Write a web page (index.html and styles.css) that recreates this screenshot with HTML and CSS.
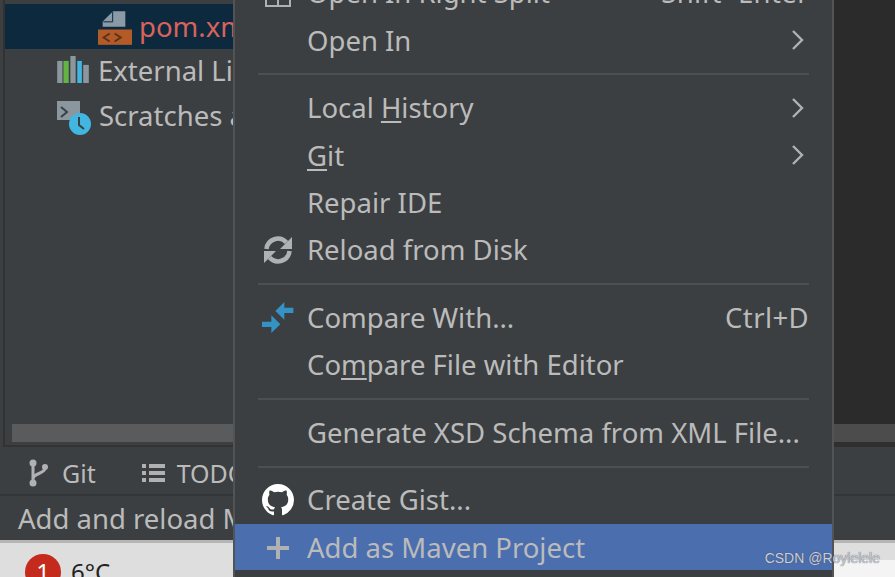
FILE: index.html
```html
<!DOCTYPE html>
<html lang="en">
<head>
  <meta charset="UTF-8">
  <title>Add as Maven Project</title>
  <link rel="stylesheet" href="styles.css">
</head>
<body>
  <div class="main-area">
    <div class="project-pane">
      <div class="tree-row selected">
        <svg class="file-icon" width="34" height="34" viewBox="294 33 102 101">
          <path d="M339 33h37v47h-68v-16z" fill="#8a9aa6"/>
          <path d="M338 35v30h-28" fill="none" stroke="#0d293e" stroke-width="3"/>
          <rect x="294" y="88" width="102" height="46" fill="#b45a27"/>
          <path d="M329 100l-18 12 18 12M344 100l18 12-18 12" fill="none" stroke="#5a3318" stroke-width="6"/>
        </svg>
        <span class="file-name">pom.xml</span>
      </div>
      <div class="tree-row top-level">
        <svg class="tree-icon libraries" width="32" height="27" viewBox="171 168 96 82">
          <rect x="171" y="183" width="16" height="67" fill="#8b979f"/>
          <rect x="190" y="183" width="16" height="67" fill="#62b543"/>
          <rect x="211" y="168" width="16" height="82" fill="#8b979f"/>
          <rect x="232" y="183" width="14" height="67" fill="#40b6e0"/>
          <rect x="250" y="195" width="17" height="55" fill="#8b979f"/>
        </svg>
        <span>External Libraries</span>
      </div>
      <div class="tree-row top-level">
        <svg class="tree-icon scratches" width="34" height="34" viewBox="0 0 34 34">
          <path d="M0 0h23v15a12 12 0 0 0-10 4H0z" fill="#8b979f"/>
          <path d="M4 6l6 5-6 5" fill="none" stroke="#3c3f41" stroke-width="2"/>
          <circle cx="23" cy="23" r="11" fill="#40b6e0"/>
          <path d="M22 16v8l5 4" fill="none" stroke="#3c3f41" stroke-width="2"/>
        </svg>
        <span>Scratches and Consoles</span>
      </div>
    </div>
    <div class="editor-pane"></div>
  </div>

  <div class="scroll-row">
    <div class="scroll-left"><div class="scroll-thumb"></div></div>
    <div class="scroll-right"><div class="scroll-thumb right"></div></div>
  </div>

  <div class="tool-bar">
    <div class="tool-btn">
      <svg width="20" height="28" viewBox="0 0 20 28">
        <path d="M5 4v20M17 9c0 6-12 5-12 11" fill="none" stroke="#afb1b3" stroke-width="3"/>
        <circle cx="5" cy="4" r="3.5" fill="#afb1b3"/>
        <circle cx="5" cy="24" r="3.5" fill="#afb1b3"/>
        <circle cx="17" cy="8" r="3" fill="#afb1b3"/>
      </svg>
      <span>Git</span>
    </div>
    <div class="tool-btn">
      <svg width="23" height="20" viewBox="0 0 23 20">
        <path d="M0 1h4v4H0zM7 1h16v4H7zM0 8h4v4H0zM7 8h16v4H7zM0 15h4v4H0zM7 15h16v4H7z" fill="#afb1b3"/>
      </svg>
      <span>TODO</span>
    </div>
  </div>

  <div class="status-bar">Add and reload Maven Project</div>

  <div class="task-bar">
    <div class="weather-badge">1</div>
    <div class="weather-temp">6°C</div>
    <div class="task-right"></div>
  </div>

  <div class="context-menu">
    <div class="menu-item">
      <span class="menu-icon">
        <svg width="26" height="28" viewBox="0 0 26 28">
          <path d="M1 1h24v26H1zM1 14h24M13 14v13" fill="none" stroke="#afb1b3" stroke-width="2"/>
        </svg>
      </span>
      <span class="menu-label">Open In Right Split</span>
      <span class="menu-key">Shift+Enter</span>
    </div>
    <div class="menu-item">
      <span class="menu-icon"></span>
      <span class="menu-label">Open In</span>
      <svg class="menu-arrow" width="14" height="22" viewBox="0 0 14 22"><path d="M2 2l9 9-9 9" fill="none" stroke="#afb1b3" stroke-width="2.4"/></svg>
    </div>
    <div class="menu-sep"></div>
    <div class="menu-item">
      <span class="menu-icon"></span>
      <span class="menu-label">Local <u>H</u>istory</span>
      <svg class="menu-arrow" width="14" height="22" viewBox="0 0 14 22"><path d="M2 2l9 9-9 9" fill="none" stroke="#afb1b3" stroke-width="2.4"/></svg>
    </div>
    <div class="menu-item">
      <span class="menu-icon"></span>
      <span class="menu-label"><u>G</u>it</span>
      <svg class="menu-arrow" width="14" height="22" viewBox="0 0 14 22"><path d="M2 2l9 9-9 9" fill="none" stroke="#afb1b3" stroke-width="2.4"/></svg>
    </div>
    <div class="menu-item">
      <span class="menu-icon"></span>
      <span class="menu-label">Repair IDE</span>
    </div>
    <div class="menu-item">
      <span class="menu-icon">
        <svg width="28" height="28" viewBox="0 0 28 28">
          <path d="M2.5 13a11.5 11.5 0 0 1 20-6.5M25.5 15a11.5 11.5 0 0 1-20 6.5" fill="none" stroke="#afb1b3" stroke-width="4.5"/>
          <path d="M28 1v12H16zM0 27V15h12z" fill="#afb1b3"/>
        </svg>
      </span>
      <span class="menu-label">Reload from Disk</span>
    </div>
    <div class="menu-sep"></div>
    <div class="menu-item">
      <span class="menu-icon">
        <svg width="32" height="31" viewBox="66 245 96 93">
          <path d="M133 245v17h27v16h-27v20l-27-26z" fill="#3592c4"/>
          <path d="M94 285l27 27-27 26v-18H66v-16h28z" fill="#3592c4"/>
        </svg>
      </span>
      <span class="menu-label">Compare With...</span>
      <span class="menu-key">Ctrl+D</span>
    </div>
    <div class="menu-item">
      <span class="menu-icon"></span>
      <span class="menu-label">Co<u>m</u>pare File with Editor</span>
    </div>
    <div class="menu-sep"></div>
    <div class="menu-item">
      <span class="menu-icon"></span>
      <span class="menu-label">Generate XSD Schema from XML File...</span>
    </div>
    <div class="menu-sep"></div>
    <div class="menu-item">
      <span class="menu-icon">
        <svg width="32" height="32" viewBox="0 0 16 16">
          <path fill="#ffffff" d="M8 0C3.58 0 0 3.58 0 8c0 3.54 2.29 6.53 5.47 7.59.4.07.55-.17.55-.38 0-.19-.01-.82-.01-1.49-2.01.37-2.53-.49-2.69-.94-.09-.23-.48-.94-.82-1.13-.28-.15-.68-.52-.01-.53.63-.01 1.08.58 1.23.82.72 1.21 1.87.87 2.33.66.07-.52.28-.87.51-1.07-1.78-.2-3.64-.89-3.64-3.95 0-.87.31-1.59.82-2.15-.08-.2-.36-1.02.08-2.12 0 0 .67-.21 2.2.82.64-.18 1.32-.27 2-.27.68 0 1.36.09 2 .27 1.53-1.04 2.2-.82 2.2-.82.44 1.1.16 1.92.08 2.12.51.56.82 1.27.82 2.15 0 3.07-1.87 3.75-3.65 3.95.29.25.54.73.54 1.48 0 1.07-.01 1.93-.01 2.2 0 .21.15.46.55.38A8.013 8.013 0 0016 8c0-4.42-3.58-8-8-8z"/>
        </svg>
      </span>
      <span class="menu-label">Create Gist...</span>
    </div>
    <div class="menu-item active">
      <span class="menu-icon">
        <svg width="22" height="22" viewBox="0 0 22 22"><path d="M11 0v22M0 11h22" stroke="#afb1b3" stroke-width="4"/></svg>
      </span>
      <span class="menu-label">Add as Maven Project</span>
    </div>
  </div>

  <div class="watermark">CSDN @Roylelele</div>
</body>
</html>
```

FILE: styles.css
```css
* {
  box-sizing: border-box;
}

body {
  margin: 0;
  width: 895px;
  height: 577px;
  overflow: hidden;
  position: relative;
  display: flex;
  flex-direction: column;
  background: #3c3f41;
  color: #bbbbbb;
  font-family: "Noto Sans", sans-serif;
  font-size: 27.5px;
}

.main-area {
  display: flex;
  flex-shrink: 0;
  height: 424px;
}

.project-pane {
  flex: 1;
  margin-left: 3px;
  padding-top: 4px;
  border-left: 2px solid #323232;
}

.editor-pane {
  width: 61px;
  background: #2b2b2b;
}

.tree-row {
  display: flex;
  align-items: center;
  height: 45px;
  white-space: nowrap;
}

.tree-row.selected {
  background: #0d293e;
  padding-left: 93px;
}

.tree-row.top-level {
  padding-left: 52px;
  padding-bottom: 2px;
}

.file-icon {
  margin: 3px 7px 0 0;
}

.tree-icon {
  margin-right: 9px;
}

.tree-icon.libraries {
  margin-bottom: 2px;
}

.tree-icon.scratches {
  margin-top: 5px;
  margin-right: 8px;
}

.file-name {
  color: #d9625c;
}

.scroll-row {
  display: flex;
  flex-shrink: 0;
  height: 23px;
}

.scroll-left {
  flex: 1;
  margin-left: 3px;
  padding-left: 7px;
  border-left: 2px solid #323232;
  border-bottom: 2px solid #313335;
}

.scroll-right {
  width: 61px;
  background: #2f2f2f;
}

.scroll-thumb {
  height: 18px;
  background: #5a5b5d;
}

.scroll-thumb.right {
  background: #4c4c4c;
}

.tool-bar {
  display: flex;
  flex-shrink: 0;
  align-items: center;
  gap: 46px;
  height: 49px;
  padding: 5px 0 0 28px;
  border-bottom: 2px solid #333537;
  font-size: 25px;
}

.tool-btn {
  display: flex;
  align-items: center;
  gap: 12px;
}

.tool-btn:first-child {
  gap: 14px;
}

.status-bar {
  flex-shrink: 0;
  height: 44px;
  padding-left: 18px;
  line-height: 46px;
  white-space: nowrap;
}

.task-bar {
  flex: 0 0 37px;
  display: flex;
  overflow: hidden;
  background: #dedede;
  border-top: 3px solid #b5b5b5;
  color: #222222;
  font-size: 24px;
  padding-left: 25px;
}

.weather-badge {
  width: 36px;
  height: 36px;
  margin-top: 11px;
  border-radius: 50%;
  background: #c42b1c;
  color: white;
  text-align: center;
  line-height: 36px;
  flex-shrink: 0;
}

.weather-temp {
  margin: 14px 0 0 10px;
  line-height: 30px;
}

.task-right {
  width: 61px;
  height: 17px;
  margin-left: auto;
  align-self: flex-end;
  background: #f4f4f4;
}

/* popup menu over the ide */
.context-menu {
  position: absolute;
  left: 233px;
  top: 0;
  width: 601px;
  height: 577px;
  overflow: hidden;
  background: #3c3f41;
  border-left: 2px solid #515355;
  border-right: 2px solid #515355;
}

.menu-item {
  display: flex;
  align-items: center;
  height: 47.4px;
  padding: 0 23px 1px;
  white-space: nowrap;
}

.menu-item:first-child {
  margin-top: -30.5px;
}

.menu-item.active {
  height: 46px;
  padding-top: 1px;
  padding-bottom: 0;
  background: #4b6eaf;
}

.menu-icon {
  width: 40px;
  margin-right: 9px;
  flex-shrink: 0;
  display: flex;
  justify-content: center;
}

.menu-icon svg {
  display: block;
}

.menu-label {
  flex: 1;
}

.menu-label u {
  text-decoration-thickness: 2px;
  text-underline-offset: 3px;
}

.menu-key {
  letter-spacing: 0.4px;
  margin-left: -2px;
}

.menu-arrow {
  margin-right: 4px;
}

.menu-sep {
  height: 20.2px;
  margin: 0 23px;
  display: flex;
  align-items: center;
}

.menu-sep::before {
  content: "";
  flex: 1;
  height: 2px;
  background: #4f4f4f;
}

.watermark {
  position: absolute;
  right: 15px;
  top: 550px;
  font-family: "Liberation Sans", sans-serif;
  font-size: 14px;
  color: #c9cedb;
  text-shadow: 0 0 1px #444444;
}
```
